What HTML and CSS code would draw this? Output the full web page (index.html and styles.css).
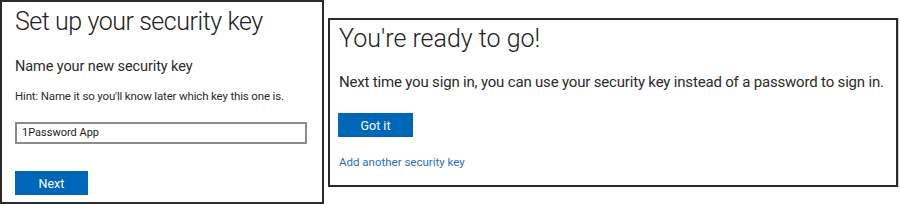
FILE: index.html
```html
<!DOCTYPE html>
<html>
<head>
<meta charset="utf-8">
<link rel="stylesheet" href="styles.css">
</head>
<body>
<div class="page">
  <section class="panel panel-setup">
    <h1 class="title title-setup">Set up your security key</h1>
    <h2 class="subtitle">Name your new security key</h2>
    <p class="hint">Hint: Name it so you'll know later which key this one is.</p>
    <div class="input">1Password App</div>
    <button class="btn btn-next">Next</button>
  </section>
  <section class="panel panel-done">
    <h1 class="title title-done">You're ready to go!</h1>
    <p class="body-text">Next time you sign in, you can use your security key instead of a password to sign in.</p>
    <button class="btn btn-got">Got it</button>
    <a class="link" href="#">Add another security key</a>
  </section>
</div>
</body>
</html>
```
FILE: styles.css
```css
html, body {
  margin: 0;
  padding: 0;
  background: #ffffff;
}
body {
  font-family: "Roboto", "Open Sans", "Liberation Sans", sans-serif;
  color: #2b2b2b;
  width: 900px;
  height: 204px;
  overflow: hidden;
}
.page {
  display: flex;
  align-items: flex-start;
  gap: 4px;
}
.panel {
  box-sizing: border-box;
  border: 2px solid #2b2b2b;
  display: flex;
  flex-direction: column;
  align-items: flex-start;
}
.panel-setup {
  width: 324px;
  height: 204px;
  padding: 4px 0 0 13px;
}
.panel-done {
  width: 570px;
  height: 169px;
  margin-top: 18px;
  padding: 3px 0 0 8px;
  box-shadow: 1px 0 0 #d0d0d0;
}
.title {
  margin: 0;
  font-weight: 300;
  font-size: 25px;
  line-height: 32px;
  color: #222222;
}
.title-setup {
  letter-spacing: -0.45px;
}
.title-done {
  margin-left: 1px;
}
.subtitle {
  margin: 19px 0 0 0;
  font-weight: 400;
  font-size: 14.5px;
  line-height: 20px;
  letter-spacing: -0.1px;
  color: #2b2b2b;
}
.hint {
  margin: 11px 0 0 0;
  font-size: 11.5px;
  line-height: 16px;
  letter-spacing: -0.16px;
}
.input {
  box-sizing: border-box;
  margin-top: 18px;
  width: 292px;
  height: 22px;
  border: 2px solid #8a8a8a;
  padding: 0 0 0 5px;
  font-size: 11px;
  line-height: 18px;
  color: #1b1b1b;
}
.btn {
  border: none;
  background: #0067b8;
  color: #ffffff;
  font-family: inherit;
  font-size: 12.5px;
  font-weight: 400;
  padding: 0;
  display: flex;
  align-items: center;
  justify-content: center;
}
.btn-next {
  margin-top: 27px;
  width: 73px;
  height: 24px;
}
.body-text {
  margin: 17px 0 0 1px;
  font-size: 15px;
  line-height: 20px;
  letter-spacing: -0.18px;
}
.btn-got {
  margin-top: 21px;
  width: 75px;
  height: 24px;
}
.link {
  margin: 17px 0 0 1px;
  font-size: 11.5px;
  line-height: 16px;
  color: #1f6fc0;
  text-decoration: none;
}
```
